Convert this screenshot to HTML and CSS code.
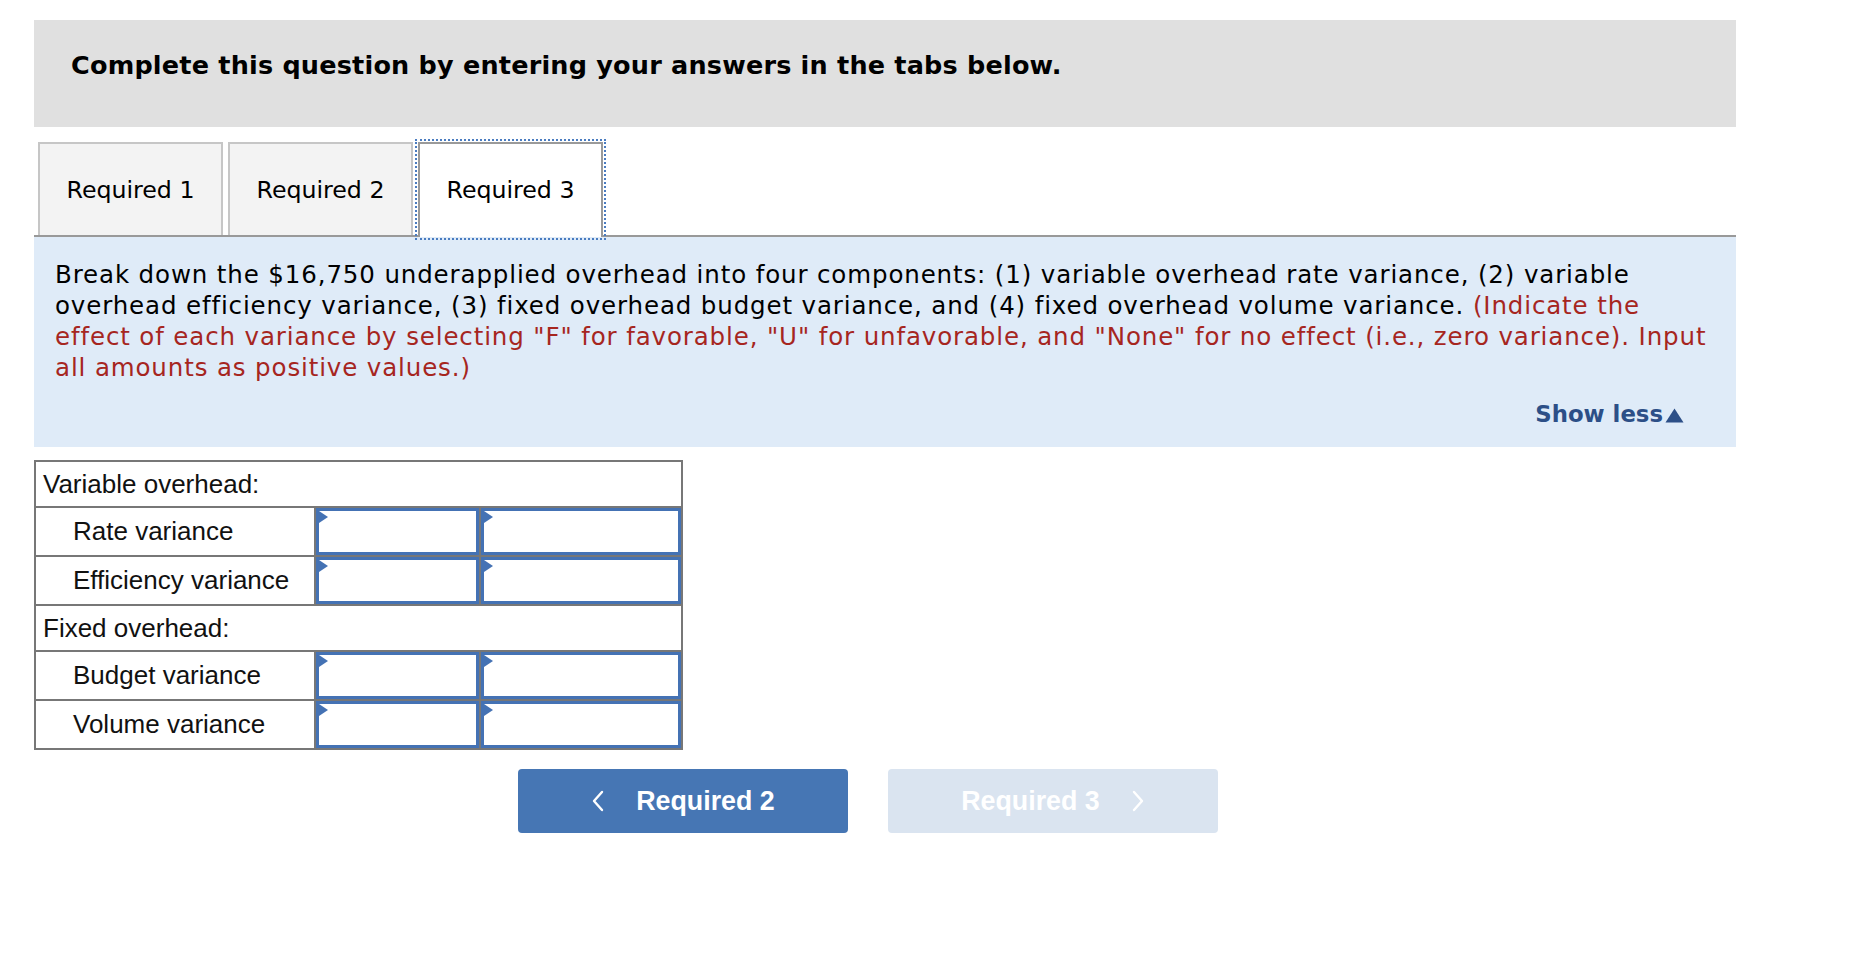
FILE: index.html
```html
<!DOCTYPE html>
<html lang="en">
<head>
<meta charset="utf-8">
<title>Required 3</title>
<link rel="stylesheet" href="styles.css">
</head>
<body>
<div class="page">
  <div class="banner">
    <h1 class="banner-title">Complete this question by entering your answers in the tabs below.</h1>
  </div>

  <div class="tabs">
    <div class="tab">Required 1</div>
    <div class="tab">Required 2</div>
    <div class="tab tab-active">Required 3</div>
  </div>

  <div class="panel">
    <p class="prompt">Break down the $16,750 underapplied overhead into four components: (1) variable overhead rate variance, (2) variable overhead efficiency variance, (3) fixed overhead budget variance, and (4) fixed overhead volume variance. <span class="hint">(Indicate the effect of each variance by selecting "F" for favorable, "U" for unfavorable, and "None" for no effect (i.e., zero variance). Input all amounts as positive values.)</span></p>
    <div class="toggle-row">
      <span class="toggle">Show less</span>
      <svg class="toggle-tri" width="19" height="15" viewBox="0 0 19 15"><path d="M9.5 0.5 L18.5 14.5 L0.5 14.5 Z" fill="#2c4f87"/></svg>
    </div>
  </div>

  <table class="grid">
    <colgroup>
      <col class="col-label">
      <col class="col-amount">
      <col class="col-effect">
    </colgroup>
    <tr class="section-row">
      <td colspan="3" class="section-label">Variable overhead:</td>
    </tr>
    <tr class="input-row">
      <td class="item-label">Rate variance</td>
      <td class="cell"><div class="field"><span class="marker"></span></div></td>
      <td class="cell"><div class="field"><span class="marker"></span></div></td>
    </tr>
    <tr class="input-row">
      <td class="item-label">Efficiency variance</td>
      <td class="cell"><div class="field"><span class="marker"></span></div></td>
      <td class="cell"><div class="field"><span class="marker"></span></div></td>
    </tr>
    <tr class="section-row">
      <td colspan="3" class="section-label">Fixed overhead:</td>
    </tr>
    <tr class="input-row">
      <td class="item-label">Budget variance</td>
      <td class="cell"><div class="field"><span class="marker"></span></div></td>
      <td class="cell"><div class="field"><span class="marker"></span></div></td>
    </tr>
    <tr class="input-row">
      <td class="item-label">Volume variance</td>
      <td class="cell"><div class="field"><span class="marker"></span></div></td>
      <td class="cell"><div class="field"><span class="marker"></span></div></td>
    </tr>
  </table>

  <div class="nav">
    <div class="btn btn-prev">
      <svg class="chev" width="14" height="22" viewBox="0 0 14 22"><path d="M11 2 L3 11 L11 20" fill="none" stroke="#ffffff" stroke-width="2.4" stroke-linecap="round" stroke-linejoin="round"/></svg>
      <span class="btn-text">Required 2</span>
    </div>
    <div class="btn btn-next">
      <span class="btn-text">Required 3</span>
      <svg class="chev" width="14" height="22" viewBox="0 0 14 22"><path d="M3 2 L11 11 L3 20" fill="none" stroke="#ffffff" stroke-width="2.4" stroke-linecap="round" stroke-linejoin="round"/></svg>
    </div>
  </div>
</div>
</body>
</html>
```

FILE: styles.css
```css
html, body {
  margin: 0;
  padding: 0;
  background: #ffffff;
}

.page {
  padding: 20px 0 0 34px;
  width: 1702px;
}

.banner {
  box-sizing: border-box;
  height: 107px;
  background: #e0e0e0;
  padding: 29px 37px 0 37px;
}

.banner-title {
  margin: 0;
  font-family: "DejaVu Sans", Verdana, sans-serif;
  font-weight: bold;
  font-size: 25.5px;
  letter-spacing: 0.2px;
  line-height: 32px;
  color: #000000;
}

.tabs {
  display: flex;
  align-items: flex-end;
  gap: 5px;
  margin-top: 15px;
  padding-left: 4px;
  border-bottom: 2px solid #999999;
}

.tab {
  box-sizing: border-box;
  width: 185px;
  height: 93px;
  background: #f3f3f3;
  border: 2px solid #c6c6c6;
  border-bottom: none;
  display: flex;
  align-items: center;
  justify-content: center;
  font-family: "DejaVu Sans", Verdana, sans-serif;
  font-size: 23.7px;
  color: #000000;
}

.tab-active {
  height: 95px;
  margin-bottom: -2px;
  background: #ffffff;
  border: 2px solid #9a9a9a;
  border-bottom: none;
  outline: 2px dotted #4a7cc0;
  outline-offset: 1px;
  padding-bottom: 2px;
}

.panel {
  box-sizing: border-box;
  height: 210px;
  background: #dfebf8;
  padding: 22px 26px 0 21px;
}

.prompt {
  margin: 0;
  font-family: "DejaVu Sans", Verdana, sans-serif;
  font-size: 24.5px;
  letter-spacing: 0.87px;
  line-height: 31px;
  color: #000000;
}

.hint {
  color: #a6261f;
}

.toggle-row {
  display: flex;
  justify-content: flex-end;
  align-items: center;
  gap: 2px;
  margin-top: 16px;
  padding-right: 26px;
}

.toggle {
  font-family: "DejaVu Sans", Verdana, sans-serif;
  font-weight: bold;
  font-size: 22.8px;
  line-height: 31px;
  color: #2c4f87;
}

.toggle-tri {
  display: block;
  margin-top: 1px;
}

.grid {
  margin-top: 13px;
  border-collapse: collapse;
  border: 2px solid #777777;
  width: 647px;
  table-layout: fixed;
  font-family: "Liberation Sans", Arial, sans-serif;
  font-size: 26px;
  color: #111111;
}

.col-label { width: 280px; }
.col-amount { width: 165px; }
.col-effect { width: 202px; }

.grid td {
  border: 2px solid #777777;
  padding: 0;
}

.section-row td {
  height: 44px;
}

.input-row td {
  height: 47px;
}

.section-label {
  padding-left: 7px !important;
  text-align: left;
}

.item-label {
  padding-left: 37px !important;
}

.cell {
  vertical-align: top;
}

.field {
  position: relative;
  box-sizing: border-box;
  height: 47px;
  border: 3px solid #4472b4;
  background: #ffffff;
}

.marker {
  position: absolute;
  left: 0;
  top: 0;
  width: 0;
  height: 0;
  border-top: 6px solid transparent;
  border-bottom: 6px solid transparent;
  border-left: 9px solid #4472b4;
}

.nav {
  display: flex;
  gap: 40px;
  margin-top: 19px;
  padding-left: 484px;
}

.btn {
  box-sizing: border-box;
  width: 330px;
  height: 64px;
  border-radius: 4px;
  display: flex;
  align-items: center;
  justify-content: center;
  gap: 31px;
  font-family: "Liberation Sans", Arial, sans-serif;
  font-weight: bold;
  font-size: 26.8px;
  color: #ffffff;
}

.btn-prev {
  background: #4676b4;
}

.btn-next {
  background: #dae4f0;
}

.chev {
  display: block;
}
```
